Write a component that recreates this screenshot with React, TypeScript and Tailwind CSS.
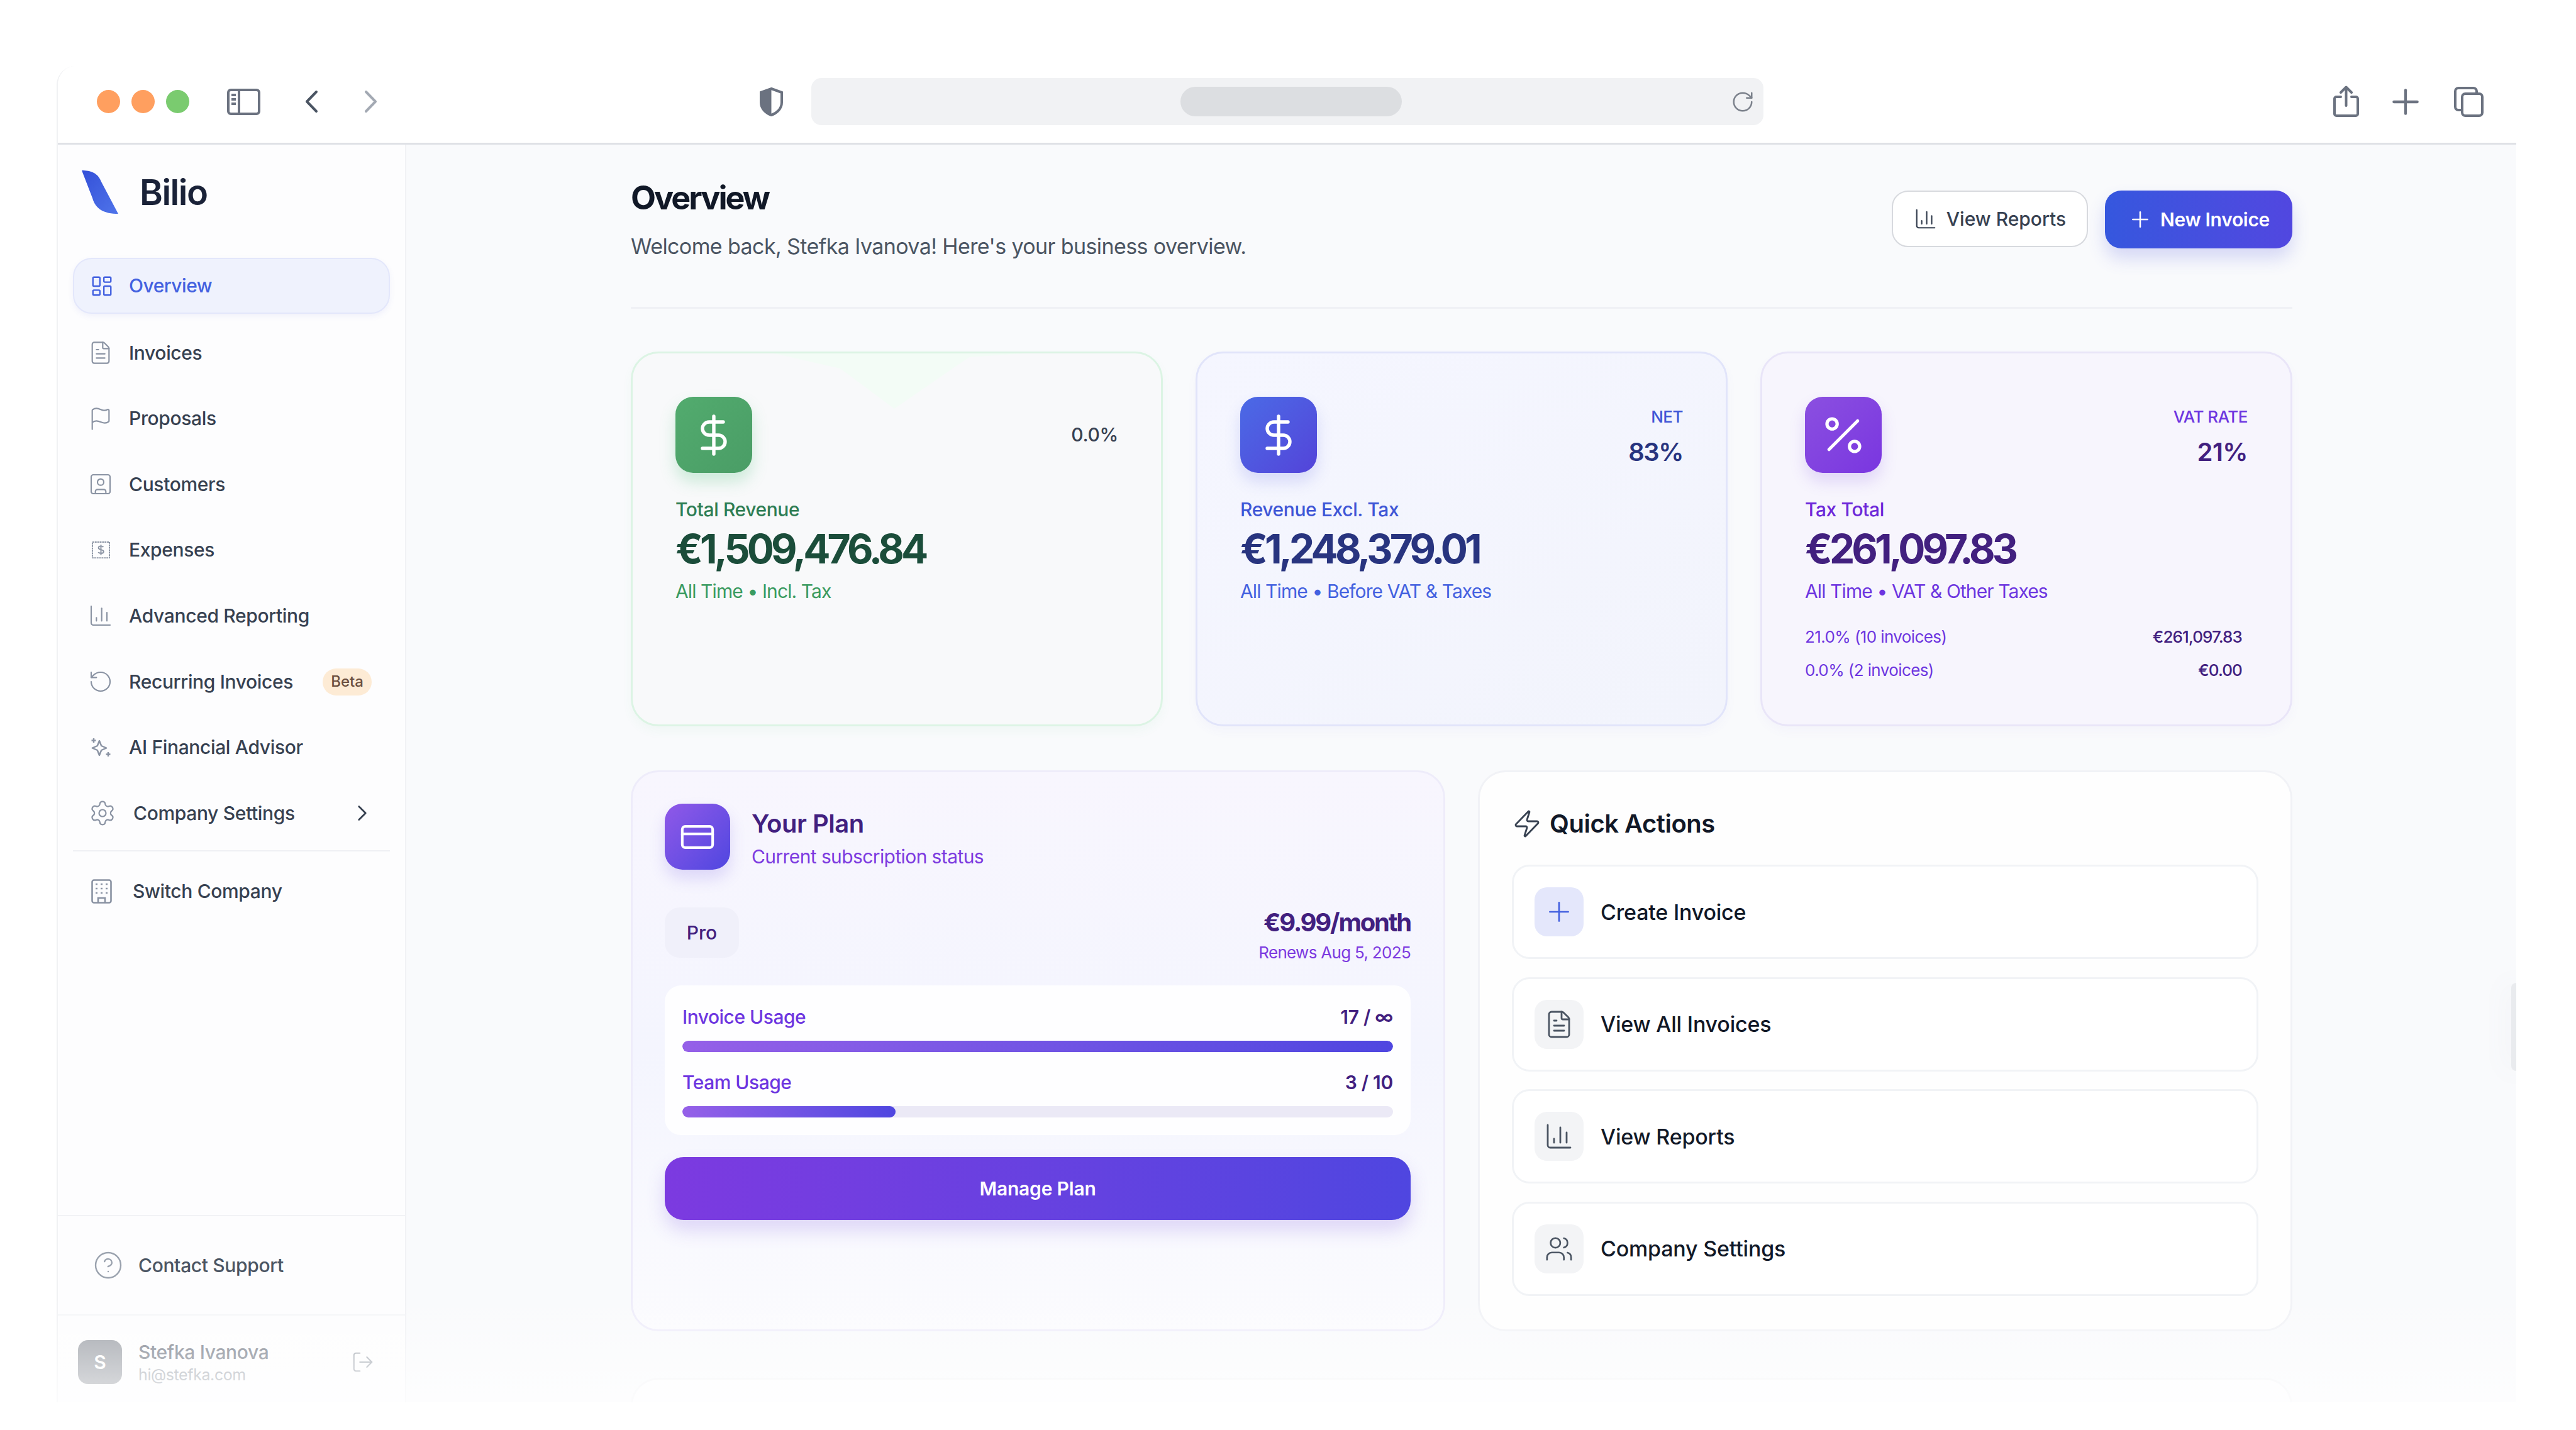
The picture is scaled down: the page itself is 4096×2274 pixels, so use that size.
import React from 'react';
import {
  LayoutDashboard, FileText, Flag, SquareUser, ChartColumn, RotateCcw, Settings,
  ChevronRight, CircleHelp, LogOut, Plus, DollarSign, Percent, CreditCard,
  Zap, Users, RotateCw,
} from 'lucide-react';

const ReceiptIcon = () => (
  <svg viewBox="0 0 32 32" fill="none" stroke="currentColor" strokeWidth="2" className="w-[31px] h-[31px]">
    <path d="M2 3h28v26H2z" strokeLinejoin="round" strokeDasharray="3 1" />
    <path d="M20 11.5c-.8-1.2-2.2-1.8-4-1.8-2.4 0-4 1.1-4 2.9 0 4 8.4 2 8.4 6 0 1.9-1.8 3-4.4 3-1.9 0-3.5-.7-4.3-2M16 7.5v17" />
  </svg>
);

const StarIcon = () => (
  <svg viewBox="0 0 32 32" fill="none" stroke="currentColor" strokeWidth="2.4" strokeLinejoin="round" className="shrink-0 w-[32px] h-[32px]">
    <path d="M14 5l3.200 8 8 3.500-8 3.500L14 28l-3.200-8-8-3.500 8-3.500z" />
    <path d="M5 1v7M1.500 4.500h7M28 23v7M24.500 26.500h7" />
  </svg>
);

const BuildingIcon = () => (
  <svg viewBox="0 0 33 39" fill="none" stroke="currentColor" strokeWidth="2.6" className="w-[33px] h-[39px]">
    <rect x="1.500" y="1.500" width="30" height="36" rx="3" />
    <path d="M7 8h3M15 8h3M23 8h3M7 15h3M15 15h3M23 15h3M7 22h3M15 22h3M23 22h3" />
    <path d="M11 37v-7h11v7" />
  </svg>
);

const navItems = [
  { label: 'Invoices', icon: <FileText size={40} strokeWidth={1.3} /> },
  { label: 'Proposals', icon: <Flag size={40} strokeWidth={1.3} /> },
  { label: 'Customers', icon: <SquareUser size={40} strokeWidth={1.3} /> },
  { label: 'Expenses', icon: <ReceiptIcon /> },
  { label: 'Advanced Reporting', icon: <ChartColumn size={40} strokeWidth={1.3} /> },
  { label: 'Recurring Invoices', icon: <RotateCcw size={40} strokeWidth={1.3} />, badge: 'Beta' },
  { label: 'AI Financial Advisor', icon: <StarIcon /> },
];

const quickActions = [
  { label: 'Create Invoice', box: 'bg-[#e4e7fb] text-[#4361e0]', icon: <Plus size={50} strokeWidth={1.3} /> },
  { label: 'View All Invoices', box: 'bg-[#f3f4f6] text-[#4b5563]', icon: <FileText size={48} strokeWidth={1.4} /> },
  { label: 'View Reports', box: 'bg-[#f3f4f6] text-[#4b5563]', icon: <ChartColumn size={48} strokeWidth={1.4} /> },
  { label: 'Company Settings', box: 'bg-[#f3f4f6] text-[#4b5563]', icon: <Users size={46} strokeWidth={1.4} /> },
];

const Sidebar = () => (
  <aside className="w-[554px] shrink-0 flex flex-col bg-[#fdfdfe] border-r-2 border-[#f1f2f5]">
    <div className="pt-[41px] pl-[38px] flex items-center gap-[34px]">
      <svg viewBox="0 0 58 69" className="w-[58px] h-[69px]">
        <defs>
          <linearGradient id="logo" x1="0" y1="0" x2="1" y2="1">
            <stop offset="0" stopColor="#3450d8" />
            <stop offset="1" stopColor="#4f74ea" />
          </linearGradient>
        </defs>
        <path d="M0 0 C14 0 26 4 31 18 L58 69 C36 69 22 62 17 44 Z" fill="url(#logo)" />
      </svg>
      <span className="text-[56px] leading-[60px] font-semibold tracking-[-1.5px] text-[#1a2238]">Bilio</span>
    </div>

    <nav className="mt-[70px] px-[24px] flex flex-col gap-[15.6px]">
      <div className="h-[89px] mb-[2px] flex items-center pl-[25px] gap-[24px] rounded-[30px] bg-[#eff2fd] border-2 border-[#e3e7fb] shadow-[0_4px_10px_rgba(90,100,220,0.08)] text-[#4361e0]">
        <LayoutDashboard size={38} strokeWidth={1.5} />
        <span className="text-[30px] font-medium tracking-[-0.5px]">Overview</span>
      </div>
      {navItems.map((item) => (
        <div key={item.label} className="h-[89px] flex items-center pl-[24px] pr-[29px] text-[#374151]">
          <span className="w-[40px] flex justify-center text-[#8a93a3]">{item.icon}</span>
          <span className="ml-[25px] text-[30px] font-medium tracking-[-0.35px]">{item.label}</span>
          {item.badge && (
            <span className="ml-auto h-[43px] px-[13px] flex items-center rounded-full bg-[#fdebd5] text-[#6b4f3f] text-[24px] font-medium">
              {item.badge}
            </span>
          )}
        </div>
      ))}
      <div className="h-[89px] flex items-center pl-[25px] pr-[23px] text-[#374151]">
        <Settings size={44} strokeWidth={1.2} className="text-[#8a93a3]" />
        <span className="ml-[27px] text-[30px] font-medium tracking-[-0.35px]">Company Settings</span>
        <ChevronRight size={42} strokeWidth={1.6} className="ml-auto" />
      </div>
    </nav>

    <div className="mx-[24px] mt-[14px] border-t-2 border-[#eff0f4]" />
    <div className="mt-[19px] h-[89px] flex items-center pl-[53px] text-[#374151]">
      <span className="text-[#8a93a3]"><BuildingIcon /></span>
      <span className="ml-[33px] text-[30px] font-medium tracking-[-0.35px]">Switch Company</span>
    </div>

    <div className="mt-auto border-t-2 border-[#f1f2f5] h-[158px] flex items-center pl-[56px] text-[#4b5563]">
      <CircleHelp size={48} strokeWidth={1.2} className="text-[#9aa2ae]" />
      <span className="ml-[24px] text-[30px] font-medium tracking-[-0.35px]">Contact Support</span>
    </div>
    <div className="border-t-2 border-[#f4f5f7] h-[140px] pt-[10px] flex items-center pl-[32px] pr-[48px]">
      <div className="w-[70px] h-[70px] rounded-[16px] bg-[#9b9fa6] flex items-center justify-center text-white text-[30px] font-semibold">S</div>
      <div className="ml-[26px] flex flex-col">
        <span className="text-[30px] leading-[40px] font-medium tracking-[-0.35px] text-[#757b87]">Stefka Ivanova</span>
        <span className="text-[25px] leading-[32px] tracking-[-0.4px] text-[#a2a8b0]">hi@stefka.com</span>
      </div>
      <LogOut size={38} strokeWidth={1.3} className="ml-auto text-[#a2a8b0]" />
    </div>
  </aside>
);

const Toolbar = () => (
  <header className="h-[125px] shrink-0 flex items-center pl-[62px] pr-[51px] pb-[9px] bg-white border-b-[3px] border-[#dfe1e6] text-[#6b7280]">
    <div className="flex gap-[18px]">
      <span className="w-[37px] h-[37px] rounded-full bg-[#ff9f5f]" />
      <span className="w-[37px] h-[37px] rounded-full bg-[#ff9f5f]" />
      <span className="w-[37px] h-[37px] rounded-full bg-[#7acb6f]" />
    </div>
    <svg viewBox="0 0 53 42" fill="none" stroke="currentColor" strokeWidth="4" className="ml-[60px] w-[53px] h-[42px]">
      <rect x="2" y="2" width="49" height="38" rx="4" />
      <path d="M19 2v38M7 10h7M7 17h7M7 24h7" />
    </svg>
    <svg viewBox="0 0 22 37" fill="none" stroke="#4b5563" strokeWidth="4" strokeLinecap="round" strokeLinejoin="round" className="ml-[70px] w-[22px] h-[37px]">
      <path d="M19 3L4 18.500 19 34" />
    </svg>
    <svg viewBox="0 0 22 37" fill="none" stroke="#a3a9b3" strokeWidth="4" strokeLinecap="round" strokeLinejoin="round" className="ml-[73px] w-[22px] h-[37px]">
      <path d="M3 3l15 15.500L3 34" />
    </svg>
    <svg viewBox="0 0 39 46" className="ml-[606px] w-[39px] h-[46px]">
      <path d="M19.500 2 L36 8 V24 C36 34 28 41 19.500 44 C11 41 3 34 3 24 V8 Z" fill="none" stroke="#6b7280" strokeWidth="4" />
      <path d="M19.500 2 L3 8 V24 C3 34 11 41 19.500 44 Z" fill="#6b7280" />
    </svg>
    <div className="ml-[44px] w-[1514px] h-[75px] rounded-[16px] bg-[#f1f2f4] flex items-center relative">
      <div className="ml-[587px] w-[352px] h-[47px] rounded-full bg-[#dcdee1]" />
      <RotateCw size={38} strokeWidth={1.6} className="absolute right-[14px] text-[#7b818b]" />
    </div>
    <div className="ml-auto flex items-center text-[#6b7280]">
      <svg viewBox="0 0 43 51" fill="none" stroke="currentColor" strokeWidth="4" strokeLinecap="round" strokeLinejoin="round" className="w-[43px] h-[51px]">
        <path d="M13 18H6a3 3 0 0 0-3 3v24a3 3 0 0 0 3 3h31a3 3 0 0 0 3-3V21a3 3 0 0 0-3-3h-7" />
        <path d="M21.500 32V3M13 11l8.500-8.500L30 11" />
      </svg>
      <Plus size={64} strokeWidth={1.6} className="ml-[41px]" />
      <svg viewBox="0 0 49 49" fill="none" stroke="currentColor" strokeWidth="4" strokeLinejoin="round" className="ml-[44px] w-[49px] h-[49px]">
        <rect x="14" y="12" width="32" height="35" rx="5" />
        <path d="M14 38H8a5 5 0 0 1-5-5V8a5 5 0 0 1 5-5h24a5 5 0 0 1 5 5v4" />
      </svg>
    </div>
  </header>
);

const Header = () => (
  <div className="flex items-start justify-between pb-[76px] border-b-[3px] border-[#f0f1f5]">
    <div>
      <h1 className="text-[52px] leading-[60px] font-bold tracking-[-3px] text-[#111827]">Overview</h1>
      <p className="mt-[27px] text-[34px] leading-[40px] tracking-[-0.6px] text-[#4b5563]">
        Welcome back, Stefka Ivanova! Here's your business overview.
      </p>
    </div>
    <div className="mt-[18px] flex gap-[27px]">
      <button className="w-[312px] h-[90px] flex items-center justify-center gap-[14px] rounded-[26px] bg-white border-2 border-[#d7d9de] text-[#374151] text-[30px] font-medium">
        <ChartColumn size={38} strokeWidth={1.4} />
        View Reports
      </button>
      <button className="w-[298px] h-[92px] flex items-center justify-center gap-[12px] rounded-[26px] bg-linear-to-r from-[#3557de] to-[#5147e0] text-white text-[30px] font-semibold tracking-[-0.3px] shadow-[0_16px_28px_rgba(70,80,220,0.2)]">
        <Plus size={40} strokeWidth={1.5} />
        New Invoice
      </button>
    </div>
  </div>
);

const RevenueCard = () => (
  <div className="relative overflow-hidden h-[596px] rounded-[44px] border-[3px] border-[#dcf4e4] bg-[#f8f9fa] pt-[69px] px-[68px] shadow-[0_8px_16px_rgba(70,190,120,0.05)]">
    <svg viewBox="0 0 845 100" className="absolute left-0 top-0 w-[845px] h-[100px]">
      <path d="M225 0 L330 24 L416 88 L535 6 L620 0 Z" fill="#f3fcf6" />
    </svg>
    <div className="relative flex items-center justify-between">
      <div className="w-[122px] h-[121px] rounded-[28px] bg-linear-to-br from-[#52ab6e] to-[#4a9d66] flex items-center justify-center text-white shadow-[0_14px_24px_rgba(70,190,120,0.25)]">
        <DollarSign size={72} strokeWidth={1.8} />
      </div>
      <span className="text-[30px] font-medium tracking-[-0.3px] text-[#374151]">0.0%</span>
    </div>
    <p className="relative mt-[38px] text-[30px] leading-[40px] font-medium tracking-[-0.4px] text-[#2e7d53]">Total Revenue</p>
    <p className="relative mt-[8px] text-[64px] leading-[70px] font-bold tracking-[-4.9px] text-[#1b4d3a]">€1,509,476.84</p>
    <p className="relative mt-[12px] text-[30px] leading-[40px] tracking-[-0.9px] text-[#3a9b60]">All Time • Incl. Tax</p>
  </div>
);

const NetCard = () => (
  <div className="h-[596px] rounded-[44px] border-[3px] border-[#e1e4fa] bg-linear-to-br from-[#f5f6ff] to-[#f2f4fc] pt-[69px] px-[68px] shadow-[0_8px_16px_rgba(90,100,220,0.04)]">
    <div className="flex items-center justify-between">
      <div className="w-[122px] h-[121px] rounded-[28px] bg-linear-to-br from-[#4a6ae6] to-[#5343d9] flex items-center justify-center text-white shadow-[0_14px_24px_rgba(80,90,220,0.18)]">
        <DollarSign size={72} strokeWidth={1.8} />
      </div>
      <div className="text-right pt-[6px]">
        <p className="text-[26px] leading-[30px] font-medium tracking-[-0.5px] text-[#3f56d6]">NET</p>
        <p className="mt-[18px] text-[40px] leading-[46px] font-semibold tracking-[-1.5px] text-[#28347f]">83%</p>
      </div>
    </div>
    <p className="mt-[38px] text-[30px] leading-[40px] font-medium tracking-[-0.4px] text-[#3f56d6]">Revenue Excl. Tax</p>
    <p className="mt-[8px] text-[64px] leading-[70px] font-bold tracking-[-4.9px] text-[#28347f]">€1,248,379.01</p>
    <p className="mt-[12px] text-[30px] leading-[40px] tracking-[-0.9px] text-[#4361e0]">All Time • Before VAT &amp; Taxes</p>
  </div>
);

const TaxCard = () => (
  <div className="h-[596px] rounded-[44px] border-[3px] border-[#e9e5f8] bg-[#f7f5fd] pt-[69px] px-[68px] shadow-[0_8px_16px_rgba(120,90,220,0.04)]">
    <div className="flex items-center justify-between">
      <div className="w-[122px] h-[121px] rounded-[28px] bg-linear-to-br from-[#8b4fe0] to-[#7a35e0] flex items-center justify-center text-white shadow-[0_14px_24px_rgba(120,70,220,0.18)]">
        <Percent size={78} strokeWidth={1.6} />
      </div>
      <div className="text-right pt-[6px]">
        <p className="text-[26px] leading-[30px] font-medium tracking-[-0.5px] text-[#6d35e0]">VAT RATE</p>
        <p className="mt-[18px] text-[40px] leading-[46px] font-semibold tracking-[-0.5px] text-[#42207f]">21%</p>
      </div>
    </div>
    <p className="mt-[38px] text-[30px] leading-[40px] font-medium tracking-[-0.4px] text-[#6d28d9]">Tax Total</p>
    <p className="mt-[8px] text-[64px] leading-[70px] font-bold tracking-[-4.9px] text-[#42207f]">€261,097.83</p>
    <p className="mt-[12px] text-[30px] leading-[40px] tracking-[-0.9px] text-[#6d35e0]">All Time • VAT &amp; Other Taxes</p>
    <div className="mt-[33px] pr-[9px] flex justify-between text-[26px] leading-[40px] tracking-[-0.6px] text-[#6d35e0]">
      <span>21.0% (10 invoices)</span>
      <span className="font-medium tracking-[-0.9px] text-[#42207f]">€261,097.83</span>
    </div>
    <div className="mt-[13px] pr-[9px] flex justify-between text-[26px] leading-[40px] tracking-[-0.6px] text-[#6d35e0]">
      <span>0.0% (2 invoices)</span>
      <span className="font-medium tracking-[-0.9px] text-[#42207f]">€0.00</span>
    </div>
  </div>
);

const Usage = ({ label, value, fill, className }: { label: string; value: string; fill: string; className?: string }) => (
  <div className={className}>
    <div className="flex justify-between text-[30px] leading-[40px]">
      <span className="font-medium tracking-[-0.5px] text-[#6d35e0]">{label}</span>
      <span className="font-semibold tracking-[-0.3px] text-[#42207f]">{value}</span>
    </div>
    <div className="mt-[18px] h-[18px] rounded-full bg-[#ebe9f6] overflow-hidden">
      <div className={`h-full rounded-full bg-linear-to-r from-[#9560e8] to-[#4f46e0] ${fill}`} />
    </div>
  </div>
);

const PlanCard = () => (
  <div className="h-[892px] rounded-[44px] border-[3px] border-[#eeecfa] bg-linear-to-b from-[#f8f6fe] via-[#f4f5fe] to-[#fbfbfe] pt-[50px] pl-[51px] pr-[52px]">
    <div className="flex items-start">
      <div className="w-[104px] h-[105px] rounded-[28px] bg-linear-to-br from-[#9058e8] to-[#4f46e0] flex items-center justify-center text-white shadow-[0_14px_24px_rgba(100,70,220,0.18)]">
        <CreditCard size={58} strokeWidth={1.7} />
      </div>
      <div className="ml-[34px] pt-[8px]">
        <h2 className="text-[40px] leading-[48px] font-semibold tracking-[-0.5px] text-[#42207f]">Your Plan</h2>
        <p className="mt-[8px] text-[30px] leading-[40px] tracking-[-0.6px] text-[#7c3ae0]">Current subscription status</p>
      </div>
    </div>
    <div className="mt-[60px] flex items-start justify-between">
      <span className="w-[118px] h-[80px] rounded-[24px] bg-[#f0f0fa] flex items-center justify-center text-[30px] font-medium text-[#42207f]">Pro</span>
      <div className="text-right">
        <p className="text-[40px] leading-[48px] font-bold tracking-[-2.2px] text-[#42207f]">€9.99/month</p>
        <p className="mt-[7px] text-[26px] leading-[34px] tracking-[-0.7px] text-[#7c3ae0]">Renews Aug 5, 2025</p>
      </div>
    </div>
    <div className="mt-[35px] h-[238px] rounded-[26px] bg-white/90 px-[28px] pt-[30px]">
      <Usage label="Invoice Usage" value="17 / ∞" fill="w-full" />
      <Usage label="Team Usage" value="3 / 10" fill="w-[30%]" className="mt-[28px]" />
    </div>
    <button className="mt-[35px] w-full h-[100px] rounded-[30px] bg-linear-to-r from-[#7c3ae0] to-[#4f46e0] text-white text-[30px] font-semibold tracking-[-0.2px] shadow-[0_16px_30px_rgba(110,70,220,0.2)]">
      Manage Plan
    </button>
  </div>
);

const QuickActions = () => (
  <div className="h-[892px] rounded-[44px] border-[3px] border-[#f1f2f6] bg-[#fefefe] pt-[60px] px-[51px]">
    <div className="flex items-center h-[44px]">
      <Zap size={48} strokeWidth={1.4} className="text-[#374151]" />
      <h2 className="ml-[12px] text-[40px] font-semibold tracking-[-0.5px] text-[#111827]">Quick Actions</h2>
    </div>
    <div className="mt-[43px] flex flex-col gap-[28.500px]">
      {quickActions.map((action) => (
        <div key={action.label} className="h-[150px] flex items-center pl-[33px] rounded-[28px] border-[3px] border-[#f1f3f6] bg-white">
          <span className={`w-[78px] h-[78px] rounded-[20px] flex items-center justify-center ${action.box}`}>{action.icon}</span>
          <span className="ml-[27px] text-[34px] font-medium tracking-[-0.2px] text-[#111827]">{action.label}</span>
        </div>
      ))}
    </div>
  </div>
);

export default function App() {
  return (
    <div className="relative w-[4096px] h-[2274px] overflow-hidden bg-white font-['Inter',sans-serif]">
      <div className="absolute left-[90px] top-[105px] w-[3911px] h-[2125px] flex flex-col rounded-tl-[30px] border-l-2 border-[#f0f1f3] overflow-hidden">
        <Toolbar />
        <div className="flex-1 min-h-0 flex">
          <Sidebar />
          <main className="flex-1 bg-[#f9fafc] pl-[357px] pr-[356px] pt-[55px] overflow-hidden">
            <Header />
            <div className="mt-[68px] grid grid-cols-3 gap-[52px]">
              <RevenueCard />
              <NetCard />
              <TaxCard />
            </div>
            <div className="mt-[70px] grid grid-cols-2 gap-[52px]">
              <PlanCard />
              <QuickActions />
            </div>
            <div className="mt-[74px] h-[200px] rounded-[44px] border-[3px] border-[#f3f4f7] bg-[#fdfdfe]" />
          </main>
        </div>
        <div className="absolute right-0 top-[1458px] w-[8px] h-[140px] rounded-l-[14px] bg-[#e9ebee] shadow-[0_0_40px_rgba(120,130,150,0.15)]" />
      </div>
      <div className="absolute left-0 right-0 top-[2060px] h-[170px] bg-linear-to-b from-white/0 to-white/70" />
    </div>
  );
}
